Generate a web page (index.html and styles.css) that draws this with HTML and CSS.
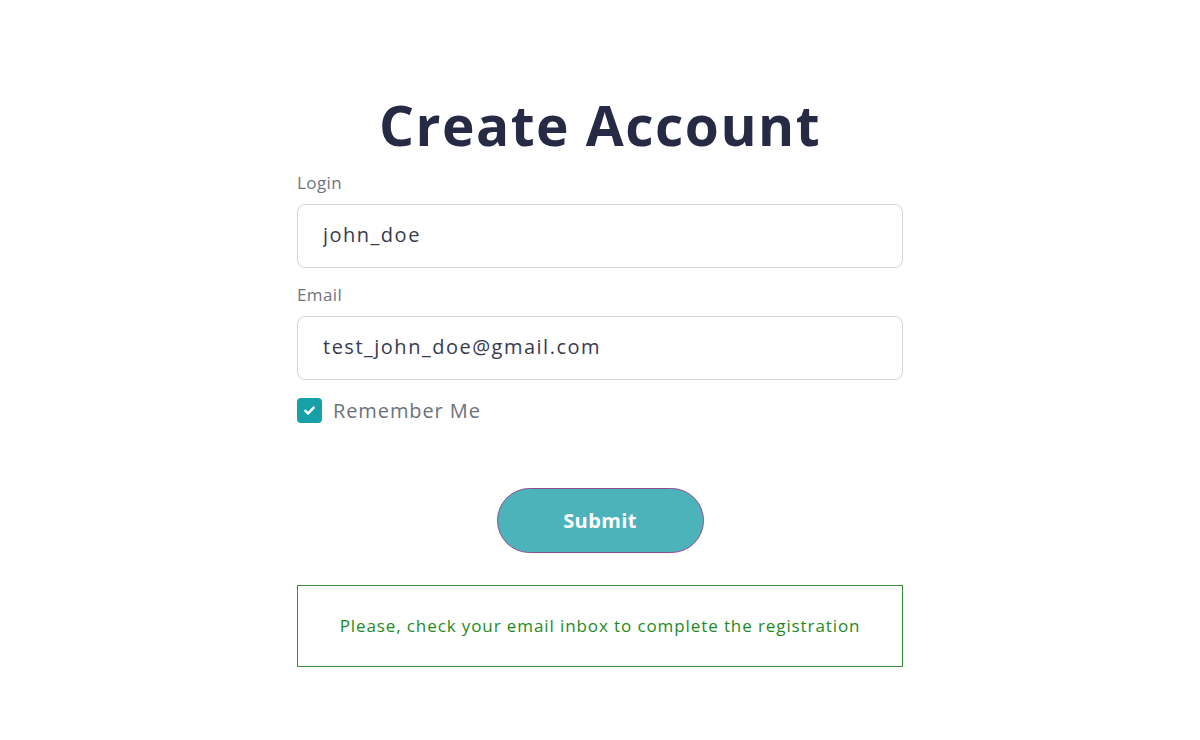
FILE: index.html
```html
<!DOCTYPE html>
<html lang="en">
<head>
<meta charset="utf-8">
<title>Create Account</title>
<link rel="stylesheet" href="styles.css">
</head>
<body>
<main class="form-wrap">
  <h1 class="title">Create Account</h1>
  <form class="form">
    <label class="field-label" for="login">Login</label>
    <input class="field-input" id="login" type="text" value="john_doe">
    <label class="field-label" for="email">Email</label>
    <input class="field-input" id="email" type="text" value="test_john_doe@gmail.com">
    <label class="remember">
      <span class="check">
        <svg viewBox="0 0 16 16" width="15" height="15"><path d="M3.6 8.4 L6.6 11.2 L12.4 5" fill="none" stroke="#fff" stroke-width="2.7" stroke-linecap="round" stroke-linejoin="round"/></svg>
      </span>
      <span class="remember-text">Remember Me</span>
    </label>
    <div class="actions">
      <button class="submit" type="button">Submit</button>
    </div>
  </form>
  <div class="message">Please, check your email inbox to complete the registration</div>
</main>
</body>
</html>
```
FILE: styles.css
```css
html, body {
  margin: 0;
  padding: 0;
  background: #ffffff;
}
body {
  font-family: "Open Sans", "Liberation Sans", sans-serif;
}
.form-wrap {
  width: 606px;
  margin: 0 auto;
  padding-top: 92px;
}
.title {
  margin: 0;
  text-align: center;
  font-size: 55px;
  line-height: 66px;
  font-weight: 700;
  color: #262a45;
  letter-spacing: 1.5px;
}
.form {
  display: flex;
  flex-direction: column;
  margin-top: 13px;
}
.field-label {
  font-size: 17px;
  line-height: 24px;
  color: #70737d;
  margin-bottom: 9px;
  letter-spacing: 0.4px;
}
.field-input {
  box-sizing: border-box;
  height: 64px;
  width: 100%;
  border: 1px solid #d2d4d8;
  border-radius: 8px;
  padding: 0 25px 3px;
  font-family: inherit;
  font-size: 20px;
  color: #383b4f;
  letter-spacing: 1.5px;
  margin: 0 0 15px 0;
  outline: none;
}
.remember {
  display: flex;
  align-items: center;
  gap: 11px;
  margin-top: 2px;
  height: 26px;
}
.check {
  width: 25px;
  height: 25px;
  border-radius: 4px;
  background: #17a0a8;
  display: flex;
  align-items: center;
  justify-content: center;
}
.remember-text {
  font-size: 20px;
  color: #6d717b;
  letter-spacing: 0.9px;
}
.actions {
  display: flex;
  justify-content: center;
  margin-top: 65px;
}
.submit {
  width: 207px;
  height: 65px;
  border-radius: 33px;
  background: #4db3bb;
  border: 1px solid #8f4f8f;
  color: #ffffff;
  font-family: inherit;
  font-size: 20px;
  font-weight: 700;
  letter-spacing: 0.4px;
}
.message {
  box-sizing: border-box;
  margin-top: 32px;
  height: 82px;
  padding-bottom: 2px;
  border: 1px solid #3a8f3a;
  display: flex;
  align-items: center;
  justify-content: center;
  color: #1e8a1e;
  font-size: 17px;
  letter-spacing: 0.9px;
}
```
